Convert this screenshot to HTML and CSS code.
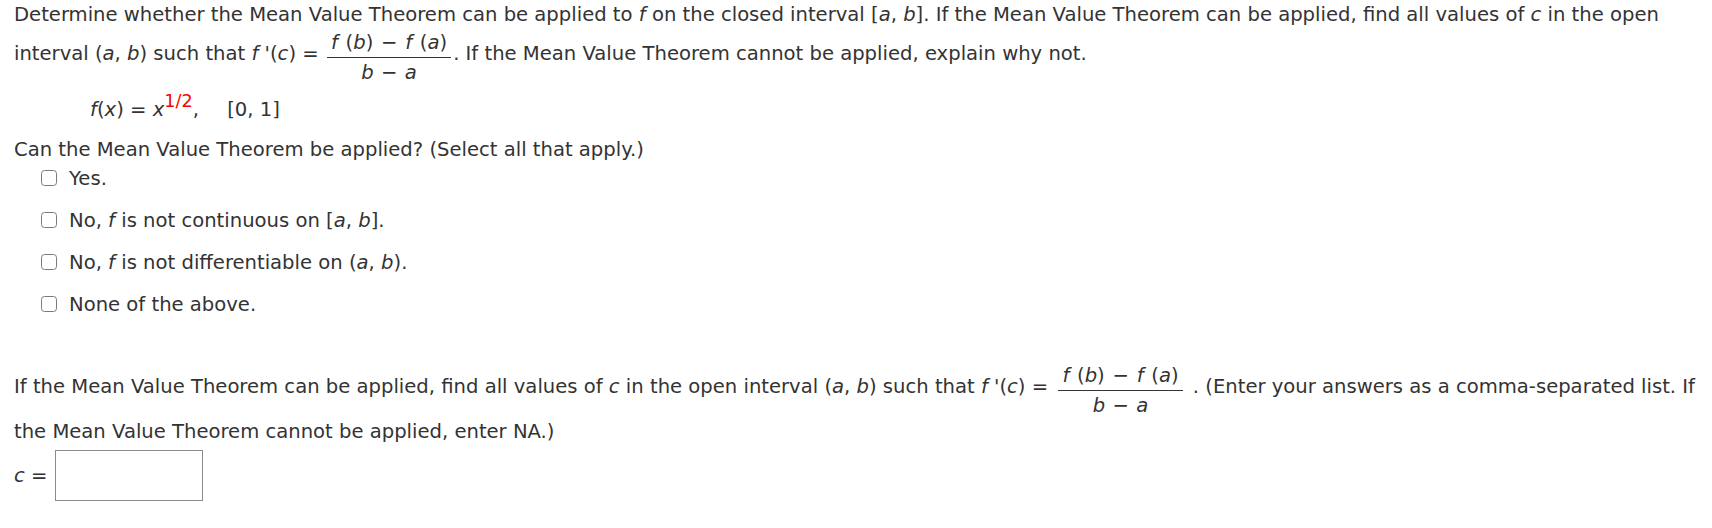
FILE: index.html
```html
<!DOCTYPE html>
<html lang="en">
<head>
<meta charset="utf-8">
<title>Mean Value Theorem</title>
<link rel="stylesheet" href="styles.css">
</head>
<body>
<div class="page">
  <p class="para intro">Determine whether the Mean Value Theorem can be applied to <i>f</i> on the closed interval [<i>a</i>, <i>b</i>]. If the Mean Value Theorem can be applied, find all values of <i>c</i> in the open interval (<i>a</i>, <i>b</i>) such that <i>f</i>&nbsp;'(<i>c</i>) = <span class="frac"><span class="num"><i>f</i>&nbsp;(<i>b</i>) − <i>f</i>&nbsp;(<i>a</i>)</span><span class="den"><i>b</i> − <i>a</i></span></span>. If the Mean Value Theorem cannot be applied, explain why not.</p>

  <p class="func"><i>f</i>(<i>x</i>) = <i>x</i><sup class="exp">1/2</sup>, <span class="interval">[0, 1]</span></p>

  <p class="question">Can the Mean Value Theorem be applied? (Select all that apply.)</p>
  <ul class="options">
    <li class="option"><input type="checkbox" class="check" id="o1"><label for="o1">Yes.</label></li>
    <li class="option"><input type="checkbox" class="check" id="o2"><label for="o2">No, <i>f</i> is not continuous on [<i>a</i>, <i>b</i>].</label></li>
    <li class="option"><input type="checkbox" class="check" id="o3"><label for="o3">No, <i>f</i> is not differentiable on (<i>a</i>, <i>b</i>).</label></li>
    <li class="option"><input type="checkbox" class="check" id="o4"><label for="o4">None of the above.</label></li>
  </ul>

  <p class="para follow">If the Mean Value Theorem can be applied, find all values of <i>c</i> in the open interval (<i>a</i>, <i>b</i>) such that <i>f</i>&nbsp;'(<i>c</i>) = <span class="frac"><span class="num"><i>f</i>&nbsp;(<i>b</i>) − <i>f</i>&nbsp;(<i>a</i>)</span><span class="den"><i>b</i> − <i>a</i></span></span> . (Enter your answers as a comma-separated list. If the Mean Value Theorem cannot be applied, enter NA.)</p>

  <div class="answer">
    <label class="answer-label" for="ans"><i>c</i> =</label>
    <input type="text" class="answer-box" id="ans">
  </div>
</div>
</body>
</html>
```

FILE: styles.css
```css
html, body {
  margin: 0;
  padding: 0;
  background: #ffffff;
}

body {
  font-family: "DejaVu Sans", Verdana, sans-serif;
  font-size: 19.6px;
  color: #333333;
}

.page {
  padding: 0 8px 0 14px;
}

p {
  margin: 0;
}

.para {
  line-height: 30px;
}

.frac {
  display: inline-flex;
  flex-direction: column;
  align-items: center;
  vertical-align: 11px;
  line-height: 22px;
  margin: 0 2px;
}

.num {
  padding: 2px 4px 3px;
  border-bottom: 1px solid #333333;
  word-spacing: 1.5px;
}

.den {
  padding-top: 4px;
  word-spacing: 1px;
}

.follow .frac {
  margin: 0 4px;
}

.func {
  margin-top: 11px;
  padding-left: 76px;
  line-height: 30px;
}

.exp {
  color: #ff0000;
  font-size: 90%;
  line-height: 0;
  vertical-align: 0.5em;
}

.interval {
  margin-left: 22px;
}

.question {
  margin-top: 12px;
  line-height: 26px;
}

.options {
  list-style: none;
  margin: 0;
  padding: 0 0 0 27px;
  display: flex;
  flex-direction: column;
  gap: 12px;
}

.option {
  display: flex;
  align-items: center;
  height: 30px;
}

.check {
  appearance: none;
  -webkit-appearance: none;
  width: 16px;
  height: 16px;
  margin: 0 12px 0 0;
  border: 1.5px solid #7a7a7a;
  border-radius: 3.5px;
  background: #ffffff;
  box-sizing: border-box;
}

.follow {
  margin-top: 44px;
}

.answer {
  display: flex;
  align-items: center;
  margin-top: 3px;
}

.answer-label {
  width: 41px;
  line-height: 30px;
}

.answer-box {
  width: 148px;
  height: 51px;
  box-sizing: border-box;
  margin: 0;
  border: 1px solid #8c8c8c;
  font: inherit;
}
```
